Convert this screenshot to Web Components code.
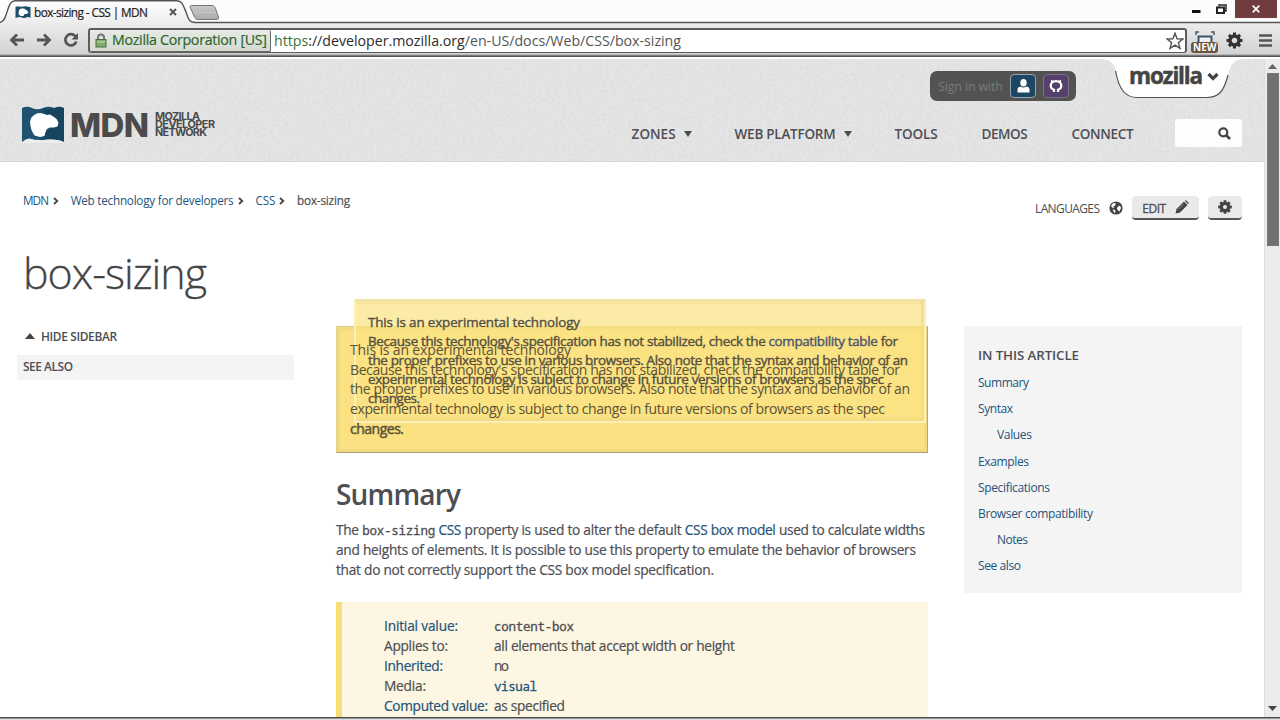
<!DOCTYPE html>
<html lang="en">
<head>
<meta charset="utf-8">
<title>box-sizing - CSS | MDN</title>
<style>
	html, body {
		margin: 0;
		width: 1280px;
		height: 720px;
		overflow: hidden;
		background: #fff;
	}
	body {
		font-family: "Open Sans", "Noto Sans", sans-serif;
		font-size: 14px;
		color: #4d4e53;
	}
</style>
</head>
<body>
<browser-window></browser-window>

<script>
function define(name, html, css) {
	const tpl = document.createElement('template');
	tpl.innerHTML = `
		<style>
		:host, * { box-sizing: border-box; }
		h1, h2, p, button { margin: 0; padding: 0; }
		svg { display: block; flex: none; }
		a { color: #23537a; text-decoration: none; }
		${css}
		</style>
		${html}
	`;
	customElements.define(name, class extends HTMLElement {
		constructor() {
			super();
			this.attachShadow({ mode: 'open' });
			this.shadowRoot.appendChild(tpl.content.cloneNode(true));
		}
	});
}

// one line of text, tracked so that it is exactly `w` pixels wide
class FitText extends HTMLElement {
	constructor() {
		super();
		this.attachShadow({ mode: 'open' });
		this.shadowRoot.innerHTML = '<style>' +
			':host { display: block; flex: none; }' +
			'span { white-space: pre; }' +
			'</style><span><slot></slot></span>';
	}
	
	connectedCallback() {
		const span = this.shadowRoot.querySelector('span');
		const w = +this.getAttribute('w');
		const count = this.textContent.length;
		if (!w || count < 2) {
			return;
		}
		const natural = span.getBoundingClientRect().width;
		span.style.letterSpacing = (w - natural) / (count - 1) + 'px';
		this.style.width = w + 'px';
	}
}
customElements.define('fit-text', FitText);

/////////////////////////////////////////////
// browser chrome
/////////////////////////////////////////////

define('tab-strip', `
	<svg class="shape" width="1280" height="24" viewBox="0 0 1280 24">
		<defs>
			<linearGradient id="g" x2="0" y2="1"><stop offset="0" stop-color="#fff"/><stop offset="1" stop-color="#ececec"/></linearGradient>
			<linearGradient id="n" x2="0" y2="1"><stop offset="0" stop-color="#c9c9c9"/><stop offset="1" stop-color="#aaa"/></linearGradient>
		</defs>
		<path d="M0 22.5C5 21 5 17 7 12C9 6 10 1 15 .7H177C182 1 183 5 186 12C188 18 189 22.5 195 22.5H1280V24H0Z" fill="url(#g)"/>
		<path d="M0 22.5C5 21 5 17 7 12C9 6 10 1 15 .7H177C182 1 183 5 186 12C188 18 189 22.5 195 22.5H1280" fill="none" stroke="#555" stroke-width="1.4"/>
		<path d="M191.500 5.500H212C214 5.500 215 7 216 10L218.500 17C219 19 218 19.500 216 19.500H198C196 19.500 195 18.500 194 16L190.500 8C190 6.500 190 5.500 191.500 5.500Z" fill="url(#n)" stroke="#777"/>
		<path d="M194 12.500H216" stroke="#d0d0d0" opacity=".6"/>
	</svg>
	<div class="row">
		<svg width="16" height="14" viewBox="0 0 16 14"><path d="M.5 2Q2 1 4 1.500T8 1.500T12 1.500T15.500 2V13Q13 11.500 11 12.500T7 12.500T.5 13Z" fill="#1d4e6e"/><path d="M4 5L6 3.500H9L12 5.500L13.500 7L12 9L9.500 9L8.500 11H5.500L3.500 9Z" fill="#fff"/></svg>
		<fit-text w="114">box-sizing - CSS | MDN</fit-text>
		<svg class="x" width="8" height="8" viewBox="0 0 8 8"><path d="M1 1L7 7M7 1L1 7" stroke="#555" stroke-width="2"/></svg>
		<div class="win">
			<svg width="9" height="3"><path d="M0 1.500H8.500" stroke="#111" stroke-width="3"/></svg>
			<svg width="11" height="10" viewBox="0 0 11 10"><path d="M3 2.500V1H10V7H8.500" fill="none" stroke="#222" stroke-width="1.400"/><path d="M1 3.500H8V9H1Z" fill="#fff" stroke="#222" stroke-width="2"/></svg>
			<div class="close"><svg width="8" height="8" viewBox="0 0 8 8"><path d="M.7 .7L7.300 7.300M7.300 .7L.7 7.300" stroke="#fff" stroke-width="1.700"/></svg></div>
		</div>
	</div>
`, `
	:host { display: grid; height: 24px; background: #fcfcfc; }
	.shape, .row { grid-area: 1 / 1; }
	.row { display: flex; align-items: center; height: 24px; padding-left: 15px; font-size: 11.800px; color: #222; }
	fit-text { margin-left: 3px; -webkit-text-stroke: .2px #222; }
	.x { margin-left: 21px; }
	.win { display: flex; align-items: flex-start; align-self: flex-start; margin-left: auto; margin-right: 3px; }
	.win > svg:nth-child(1) { margin-top: 10px; }
	.win > svg:nth-child(2) { margin: 4px 8px 0 15px; }
	.close { display: flex; align-items: center; justify-content: center; width: 42px; height: 18px; background: #703c3e; }
`);

define('tool-bar', `
	<svg class="nav" width="16" height="14" viewBox="0 0 16 14"><path d="M15 7H3M8 1.500L2.500 7L8 12.500" fill="none" stroke="#555" stroke-width="2.800"/></svg>
	<svg class="nav" width="16" height="14" viewBox="0 0 16 14"><path d="M1 7H13M8 1.500L13.500 7L8 12.500" fill="none" stroke="#555" stroke-width="2.800"/></svg>
	<svg class="nav" width="16" height="16" viewBox="0 0 16 16"><path d="M12.500 4.500A5.600 5.600 0 1 0 13.300 9.500" fill="none" stroke="#555" stroke-width="2.700"/><path d="M15 1V7.500H8.500Z" fill="#555"/></svg>
	<div class="omni">
		<div class="ssl">
			<svg width="12" height="15" viewBox="0 0 12 15"><path d="M3 7V4.500A3 3 0 0 1 9 4.500V7" fill="none" stroke="#777" stroke-width="2"/><rect x="1" y="6.500" width="10" height="7.500" fill="#7eae6d" stroke="#4d6b42"/><path d="M2 9H10" stroke="#c5e0b8"/></svg>
			<fit-text w="155">Mozilla Corporation [US]</fit-text>
		</div>
		<fit-text class="url" w="407"><span class="s">https</span>://developer.mozilla.org<span class="p">/en-US/docs/Web/CSS/box-sizing</span></fit-text>
		<svg class="star" width="18" height="18" viewBox="0 0 18 18"><path d="M9 1.200L11.100 6.700L17 7L12.400 10.600L14 16.400L9 13.100L4 16.400L5.600 10.600L1 7L6.900 6.700Z" fill="#fff" stroke="#555" stroke-width="1.400"/></svg>
	</div>
	<div class="ext">
		<svg width="20" height="22" viewBox="0 0 20 22"><path d="M1 4V1H4M16 1H19V4" fill="none" stroke="#555" stroke-width="1.500"/><path d="M3.500 14V5.500H16.500V14" fill="#eee" stroke="#38546a" stroke-width="2"/></svg>
		<span>NEW</span>
	</div>
	<svg class="gear" width="17" height="17" viewBox="-8.500 -8.500 17 17"><circle r="4.500" fill="none" stroke="#333" stroke-width="3.400"/><path d="M-8 0H-5M8 0H5M0 -8V-5M0 8V5M-5.600 -5.600L-3.600 -3.600M5.600 5.600L3.600 3.600M-5.600 5.600L-3.600 3.600M5.600 -5.600L3.600 -3.600" stroke="#333" stroke-width="3"/></svg>
	<svg class="menu" width="14" height="13" viewBox="0 0 14 13"><path d="M0 1.500H13M0 6.500H13M0 11.500H13" stroke="#555" stroke-width="2.600"/></svg>
`, `
	:host {
		display: flex;
		align-items: center;
		height: 35px;
		padding: 0 0 3px 9px;
		background: linear-gradient(#ececec, #d2d2d2 30px, #9c9c9c 31px, #555 32px, #555 33px, #fff 33px);
	}
	.nav { margin-right: 11px; }
	.nav + .nav + .nav { margin-right: 9px; }
	.omni {
		display: flex;
		align-items: center;
		width: 1099px;
		height: 25px;
		border: 2px solid #5c5c5c;
		border-bottom-width: 1px;
		border-radius: 3px;
		background: #fff;
		font-size: 14.200px;
		line-height: 21px;
		color: #2b2b2b;
	}
	.ssl {
		display: flex;
		align-items: center;
		width: 181px;
		height: 22px;
		padding-left: 5px;
		border: solid #666;
		border-width: 0 1px 1px 0;
		border-radius: 2px;
		background: linear-gradient(#e6e9e4, #d5dbd2);
		color: #2f652f;
	}
	.ssl { -webkit-text-stroke: .2px; }
	.ssl fit-text { margin-left: 5px; }
	.url { margin-left: 3px; }
	fit-text { margin-top: -1px; }
	.s { color: #3c733c; }
	.p { color: #555; }
	.star { margin-left: auto; margin-right: 1px; }
	.ext { display: grid; justify-items: center; margin-left: 4px; width: 27px; height: 25px; }
	.ext > * { grid-area: 1 / 1; }
	.ext svg { margin-top: 3px; }
	.ext span {
		align-self: end;
		padding: 0 2px;
		border-radius: 3px;
		background: #6b5441;
		color: #fff;
		font: bold 10px/11px "Open Sans", sans-serif;
	}
	.gear { margin-left: 8px; }
	.menu { margin-left: 16px; }
`);

define('scroll-bar', `
	<svg width="9" height="5" viewBox="0 0 9 5"><path d="M4.500 0L9 5H0Z" fill="#666"/></svg>
	<div></div>
	<svg class="down" width="9" height="5" viewBox="0 0 9 5"><path d="M4.500 5L9 0H0Z" fill="#444"/></svg>
`, `
	:host {
		display: flex;
		flex-direction: column;
		align-items: center;
		width: 16px;
		padding: 5px 0 6px;
		background: #ebebeb;
		border-left: 1px solid #ddd;
	}
	div { width: 12px; height: 173px; margin-top: 4px; background: #707070; border: 1px solid #777; }
	.down { margin-top: auto; }
`);

/////////////////////////////////////////////
// site header
/////////////////////////////////////////////

define('mdn-logo', `
	<svg width="42" height="37" viewBox="0 0 42 37">
		<path d="M0 2Q5 -.5 10 2T21 2T32 2T42 2V36Q37 32.500 32 35T21 35T10 35T0 36Z" fill="#1f5270"/>
		<path d="M21 2Q26 4.500 32 2T42 2V36Q37 32.500 32 35T21 35Z" fill="#174560"/>
		<path d="M8 16L9 12L12 9L16 7L21 7.500L25 9L28 8.500L32 11L35 13.500L36.500 17L35.500 20.500L32 21.500L28 21.500L25 23L23.500 26L22.500 30L18 31L12.500 29.500L11 27L9.500 24L8.500 20Z" fill="#fff"/>
		<path d="M0 36Q5 31 10 33T21 34T32 33.500T42 36V37H0Z" fill="#ededed"/>
	</svg>
	<fit-text class="mdn" w="79">MDN</fit-text>
	<div class="words">
		<fit-text w="45">MOZILLA</fit-text>
		<fit-text w="60">DEVELOPER</fit-text>
		<fit-text w="52">NETWORK</fit-text>
	</div>
`, `
	:host { display: flex; color: #4b4b4b; font-family: Inter, "Open Sans", sans-serif; }
	.mdn { margin-left: 6px; font-size: 33px; font-weight: 800; line-height: 39px; }
	.words { display: flex; flex-direction: column; margin: 7px 0 0 6px; font-size: 10.800px; font-weight: 700; line-height: 8.200px; }
`);

define('login-box', `
	<fit-text w="65">Sign in with</fit-text>
	<b class="persona"><svg width="13" height="14" viewBox="0 0 13 14"><ellipse cx="6.500" cy="3.800" rx="3.200" ry="3.800" fill="#fff"/><path d="M.5 13.500V10.500Q.5 8 3.500 7.500Q6.500 9.500 9.500 7.500Q12.500 8 12.500 10.500V13.500Z" fill="#fff"/></svg></b>
	<b class="github"><svg width="14" height="14" viewBox="0 0 14 14"><path d="M5 13V10.800C2.700 10.200 1.700 8.700 1.700 6.800C1.700 4 4 2.200 7 2.200S12.300 4 12.300 6.800C12.300 8.700 11.300 10.200 9 10.800V13" fill="none" stroke="#fff" stroke-width="2.200"/><path d="M1.800 .8L5 2L2.200 4.500ZM12.200 .8L9 2L11.800 4.500Z" fill="#fff"/></svg></b>
`, `
	:host {
		display: flex;
		align-items: center;
		width: 146px;
		height: 30px;
		padding-left: 8px;
		border-radius: 7px;
		background: #525252;
		color: #7a7a7a;
		font-size: 12.500px;
	}
	b {
		display: flex;
		align-items: center;
		justify-content: center;
		width: 26px;
		height: 24px;
		margin-left: 7px;
		border: 1px solid #96a4ae;
		border-radius: 4px;
	}
	.persona { background: #1d4663; }
	.github { background: #55406b; border-color: #7d7188; }
`);

define('mozilla-tab', `
	<svg width="139" height="40" viewBox="0 0 139 40">
		<path d="M0 0C8 1 12 5 13.500 14C16 30 22 38.500 34 38.500H104C116 38.500 121 32 125 16C127 6 131 1 139 0Z" fill="#fff"/>
		<path d="M12.500 12C16 30 22 38.500 34 38.500H104C116 38.500 121 32 125 16" fill="none" stroke="#555" stroke-width="1.200"/>
	</svg>
	<div>
		<fit-text w="74">mozilla</fit-text>
		<svg width="12" height="9" viewBox="0 0 12 9"><path d="M1.500 2L6 6.500L10.500 2" fill="none" stroke="#444" stroke-width="3.200"/></svg>
	</div>
`, `
	:host { display: grid; width: 139px; height: 40px; }
	:host > svg, :host > div, svg, div { grid-area: 1 / 1; }
	div { display: flex; align-items: center; height: 32px; padding-left: 26px; font-size: 22.500px; font-weight: 700; color: #444; -webkit-text-stroke: .5px; }
	div svg { margin: 3px 0 0 4px; }
`);

define('site-nav', `
	<fit-text w="44">ZONES</fit-text>
	<i></i>
	<fit-text w="101">WEB PLATFORM</fit-text>
	<i></i>
	<fit-text w="43">TOOLS</fit-text>
	<fit-text w="46">DEMOS</fit-text>
	<fit-text w="62">CONNECT</fit-text>
	<div><svg width="13" height="13" viewBox="0 0 13 13"><circle cx="5.300" cy="5.300" r="4" fill="none" stroke="#444" stroke-width="2.200"/><path d="M8 8L12 12" stroke="#444" stroke-width="2.600"/></svg></div>
`, `
	:host { display: flex; align-items: center; height: 28px; padding-left: .600px; font-size: 13.500px; font-weight: 600; line-height: 20px; color: #4d4e53; }
	i { margin: 1px 0 0 8px; border: 4.500px solid transparent; border-bottom: 0; border-top: 6px solid #4d4e53; }
	fit-text { margin-top: 2px; }
	i + fit-text { margin-left: 43px; }
	fit-text + fit-text { margin-left: 44px; }
	div { display: flex; align-items: center; justify-content: flex-end; width: 67px; height: 28px; margin-left: auto; padding-right: 11px; background: #fdfdfd; border-radius: 3px; }
`);

define('site-header', `
	<svg class="grain" width="1264" height="103">
		<filter id="f" x="0" y="0" width="100%" height="100%">
			<feTurbulence type="fractalNoise" baseFrequency=".35" numOctaves="3" seed="4"/>
			<feColorMatrix type="matrix" values="1 0 0 0 .35  1 0 0 0 .35  1 0 0 0 .35  0 0 0 0 1"/>
		</filter>
		<rect width="1264" height="103" filter="url(#f)"/>
	</svg>
	<div class="row">
		<mdn-logo></mdn-logo>
		<div class="right">
			<div class="top"><login-box></login-box><mozilla-tab></mozilla-tab></div>
			<site-nav></site-nav>
		</div>
	</div>
`, `
	:host { display: grid; width: 1264px; height: 103px; background: #e2e2e2; border-bottom: 1px solid #d5d5d5; overflow: hidden; }
	.grain, .row { grid-area: 1 / 1; }
	.grain { opacity: .12; }
	.row { z-index: 1; display: flex; justify-content: space-between; padding: 0 22px; }
	mdn-logo { margin-top: 47px; }
	.right { width: 611px; }
	.top { display: flex; justify-content: flex-end; height: 42px; gap: 27px; }
	login-box { margin-top: 12px; }
	site-nav { margin-top: 18px; }
`);

/////////////////////////////////////////////
// article
/////////////////////////////////////////////

define('crumb-trail', `
	<fit-text w="26"><a>MDN</a></fit-text><svg width="6" height="8" viewBox="0 0 6 8"><path d="M1 1L4.300 4L1 7" fill="none" stroke="#444" stroke-width="1.800"/></svg>
	<fit-text w="163"><a>Web technology for developers</a></fit-text><svg width="6" height="8" viewBox="0 0 6 8"><path d="M1 1L4.300 4L1 7" fill="none" stroke="#444" stroke-width="1.800"/></svg>
	<fit-text w="20"><a>CSS</a></fit-text><svg width="6" height="8" viewBox="0 0 6 8"><path d="M1 1L4.300 4L1 7" fill="none" stroke="#444" stroke-width="1.800"/></svg>
	<fit-text w="53" class="cur">box-sizing</fit-text>
`, `
	:host { display: flex; align-items: center; height: 16px; font-size: 11.700px; line-height: 16px; }
	svg { margin: 1px 11.700px 0 4px; }
	.cur { -webkit-text-stroke: .2px; }
`);

define('page-tools', `
	<fit-text w="65">LANGUAGES</fit-text>
	<svg class="globe" width="14" height="14" viewBox="0 0 14 14"><circle cx="7" cy="7" r="6.600" fill="#444"/><path d="M2 4.500L4.500 2L7 2.500L6 4.500L4.500 5.500L5 7L3 6.500Z M8.500 6L11 4.500L12 7L10.500 10.500L9 9.500L8 7.500Z M3.500 8.500L6 9L6.500 11L5.500 12Z" fill="#fff"/></svg>
	<button class="edit">
		<fit-text w="24">EDIT</fit-text>
		<svg width="14" height="14" viewBox="0 0 14 14"><path d="M.5 13.500L1.500 9L9 1.500L12.500 5L5 12.500Z M9.800 .8L11 .2L13.800 3L13.200 4.200Z" fill="#444"/><path d="M3 9.500L8.500 4" stroke="#999" stroke-width=".8"/></svg>
	</button>
	<button class="opts">
		<svg width="14" height="14" viewBox="-7 -7 14 14"><circle r="3.600" fill="none" stroke="#444" stroke-width="3.200"/><path d="M-6.800 0H-4M6.800 0H4M0 -6.800V-4M0 6.800V4M-4.700 -4.700L-3 -3M4.700 4.700L3 3M-4.700 4.700L-3 3M4.700 -4.700L3 -3" stroke="#444" stroke-width="2.800"/></svg>
	</button>
`, `
	:host { display: flex; align-items: center; height: 24px; font-size: 12px; line-height: 20px; }
	fit-text { margin-top: 2px; }
	.globe { margin: -1px 9px 0 9px; }
	button {
		display: flex;
		align-items: center;
		justify-content: center;
		height: 24px;
		border: 0;
		border-bottom: 2px solid #555;
		border-radius: 4px;
		background: #eaeaea;
		color: inherit;
		font: 500 12px/20px "Open Sans", sans-serif;
	}
	.edit { width: 67px; gap: 9px; }
	.edit fit-text { margin-top: 3px; -webkit-text-stroke: .3px; }
	.opts { width: 34px; margin-left: 9px; }
`);

define('side-nav', `
	<div class="toggle"><i></i><fit-text w="76">HIDE SIDEBAR</fit-text></div>
	<div class="head"><fit-text w="50">SEE ALSO</fit-text></div>
`, `
	:host { display: block; width: 277px; font-size: 11.900px; font-weight: 600; line-height: 20px; }
	.toggle { display: flex; align-items: center; padding-left: 8px; height: 20px; }
	i { margin-right: 6px; border: 5px solid transparent; border-top: 0; border-bottom: 6px solid #444; }
	.head { height: 25px; margin-top: 9px; padding: 1px 0 0 6px; background: #f4f4f4; }
`);

define('note-box', `
	<slot></slot>
	<div class="front"><slot name="front"></slot></div>
`, `
	:host {
		position: relative;
		display: flex;
		flex-direction: column;
		height: 127px;
		padding: 13px 0 0 13px;
		border: 1px solid #e0cf88;
		border-right: 1px solid #b5a66b;
		border-bottom: 1px solid #a99c66;
		background: #fbe182;
		box-shadow: inset 3px 3px 0 #f2da80, inset -3px -3px 0 #f2da80;
		font-size: 14px;
		line-height: 19.700px;
		color: #5b5339;
	}
	/* translucent copy behind the text, up and to the right of the note */
	.front {
		position: absolute;
		left: 17px;
		top: -28px;
		display: flex;
		flex-direction: column;
		width: 572px;
		height: 124px;
		padding: 12px 0 0 12px;
		border: 2px solid #fdefb9;
		border-top-color: #efe0a3;
		background: rgba(251, 226, 130, .7);
		box-shadow: inset -3px -3px 0 rgba(236, 212, 124, .5), inset 0 3px 0 rgba(242, 224, 150, .5);
		font-size: 13.400px;
		line-height: 18.900px;
		color: #55503f;
		-webkit-text-stroke: .4px;
	}
	::slotted(:not([slot])) { position: relative; z-index: 1; }
`);

define('prop-table', `
	<div><fit-text w="74"><a>Initial value:</a></fit-text><fit-text w="80"><code>content-box</code></fit-text></div>
	<div><fit-text w="64">Applies to:</fit-text><fit-text w="241">all elements that accept width or height</fit-text></div>
	<div><fit-text w="59"><a>Inherited:</a></fit-text><fit-text w="15">no</fit-text></div>
	<div><fit-text w="42">Media:</fit-text><fit-text w="43"><a><code>visual</code></a></fit-text></div>
	<div><fit-text w="104"><a>Computed value:</a></fit-text><fit-text w="71">as specified</fit-text></div>
`, `
	:host { display: block; height: 116px; padding: 14px 0 0 42px; border-left: 6px solid #f8de74; background: #fdf6e2; font-size: 13.700px; line-height: 20px; overflow: hidden; }
	div { display: grid; grid-template-columns: 110px 1fr; height: 20px; }
	code { font-family: "Noto Sans Mono", "DejaVu Sans Mono", monospace; font-size: 12.500px; -webkit-text-stroke: .3px; }
	fit-text { -webkit-text-stroke: .2px; }
`);

define('toc-panel', `
	<fit-text class="h" w="101">IN THIS ARTICLE</fit-text>
	<fit-text w="51"><a>Summary</a></fit-text>
	<fit-text w="35"><a>Syntax</a></fit-text>
	<fit-text class="sub" w="35"><a>Values</a></fit-text>
	<fit-text w="51"><a>Examples</a></fit-text>
	<fit-text w="72"><a>Specifications</a></fit-text>
	<fit-text w="115"><a>Browser compatibility</a></fit-text>
	<fit-text class="sub" w="31"><a>Notes</a></fit-text>
	<fit-text w="43"><a>See also</a></fit-text>
`, `
	:host { display: flex; flex-direction: column; width: 278px; height: 267px; padding: 19px 0 0 14px; background: #f4f4f4; font-size: 12px; line-height: 26.200px; }
	.h { margin-bottom: 5px; font-size: 13.300px; font-weight: 600; line-height: 20px; }
	.sub { margin-left: 19px; }
`);

define('doc-article', `
	<note-box>
		<fit-text w="221">This is an experimental technology</fit-text>
		<fit-text w="550">Because this technology's specification has not stabilized, check the compatibility table for</fit-text>
		<fit-text w="560">the proper prefixes to use in various browsers. Also note that the syntax and behavior of an</fit-text>
		<fit-text w="535">experimental technology is subject to change in future versions of browsers as the spec</fit-text>
		<fit-text w="54" class="strong">changes.</fit-text>
		<fit-text slot="front" w="212">This is an experimental technology</fit-text>
		<fit-text slot="front" w="530">Because this technology's specification has not stabilized, check the <span class="link">compatibility table</span> for</fit-text>
		<fit-text slot="front" w="540">the proper prefixes to use in various browsers. Also note that the syntax and behavior of an</fit-text>
		<fit-text slot="front" w="516">experimental technology is subject to change in future versions of browsers as the spec</fit-text>
		<fit-text slot="front" w="52">changes.</fit-text>
	</note-box>
	<h2><fit-text w="125">Summary</fit-text></h2>
	<p>
		<span><fit-text w="23">The</fit-text><fit-text w="73"><code>box-sizing</code></fit-text><fit-text w="23"><a>CSS</a></fit-text><fit-text w="217">property is used to alter the default</fit-text><fit-text w="91"><a>CSS box model</a></fit-text><fit-text w="146">used to calculate widths</fit-text></span>
		<span><fit-text w="580">and heights of elements. It is possible to use this property to emulate the behavior of browsers</fit-text></span>
		<span><fit-text w="378">that do not correctly support the CSS box model specification.</fit-text></span>
	</p>
	<prop-table></prop-table>
`, `
	:host { display: block; width: 592px; }
	h2 { margin-top: 26px; font-size: 28px; font-weight: 600; line-height: 30px; }
	p { margin: 11px 0 22px; font-size: 13.700px; line-height: 20px; -webkit-text-stroke: .2px; }
	p > span { display: flex; gap: 3.200px; height: 20px; }
	code { font-family: "Noto Sans Mono", "DejaVu Sans Mono", monospace; font-size: 12.500px; -webkit-text-stroke: .3px; }
	.strong { -webkit-text-stroke: .5px; }
	.link { color: #4b5670; }
`);

define('browser-window', `
	<tab-strip></tab-strip>
	<tool-bar></tool-bar>
	<div class="view">
		<div class="page">
			<site-header></site-header>
			<div class="bar"><crumb-trail></crumb-trail><page-tools></page-tools></div>
			<h1><fit-text w="184">box-sizing</fit-text></h1>
			<div class="cols">
				<side-nav></side-nav>
				<doc-article></doc-article>
				<toc-panel></toc-panel>
			</div>
		</div>
		<scroll-bar></scroll-bar>
	</div>
`, `
	:host {
		display: flex;
		flex-direction: column;
		width: 1280px;
		height: 720px;
		overflow: hidden;
		background: linear-gradient(#fff 717px, #444 717px, #555 718px, #ddd 719px);
	}
	.view { display: flex; height: 658px; overflow: hidden; }
	.page { width: 1264px; background: #fff; }
	.bar { display: flex; justify-content: space-between; align-items: flex-start; height: 28px; margin: 30px 22px 0 23px; }
	page-tools { margin-top: 4px; }
	h1 { margin: 23px 0 0 23px; font-size: 43px; font-weight: 300; line-height: 60px; color: #444; -webkit-text-stroke: .3px; }
	.cols { display: flex; margin: 23px 0 0 17px; }
	doc-article { margin: 0 36px 0 42px; }
`);
</script>
</body>
</html>
